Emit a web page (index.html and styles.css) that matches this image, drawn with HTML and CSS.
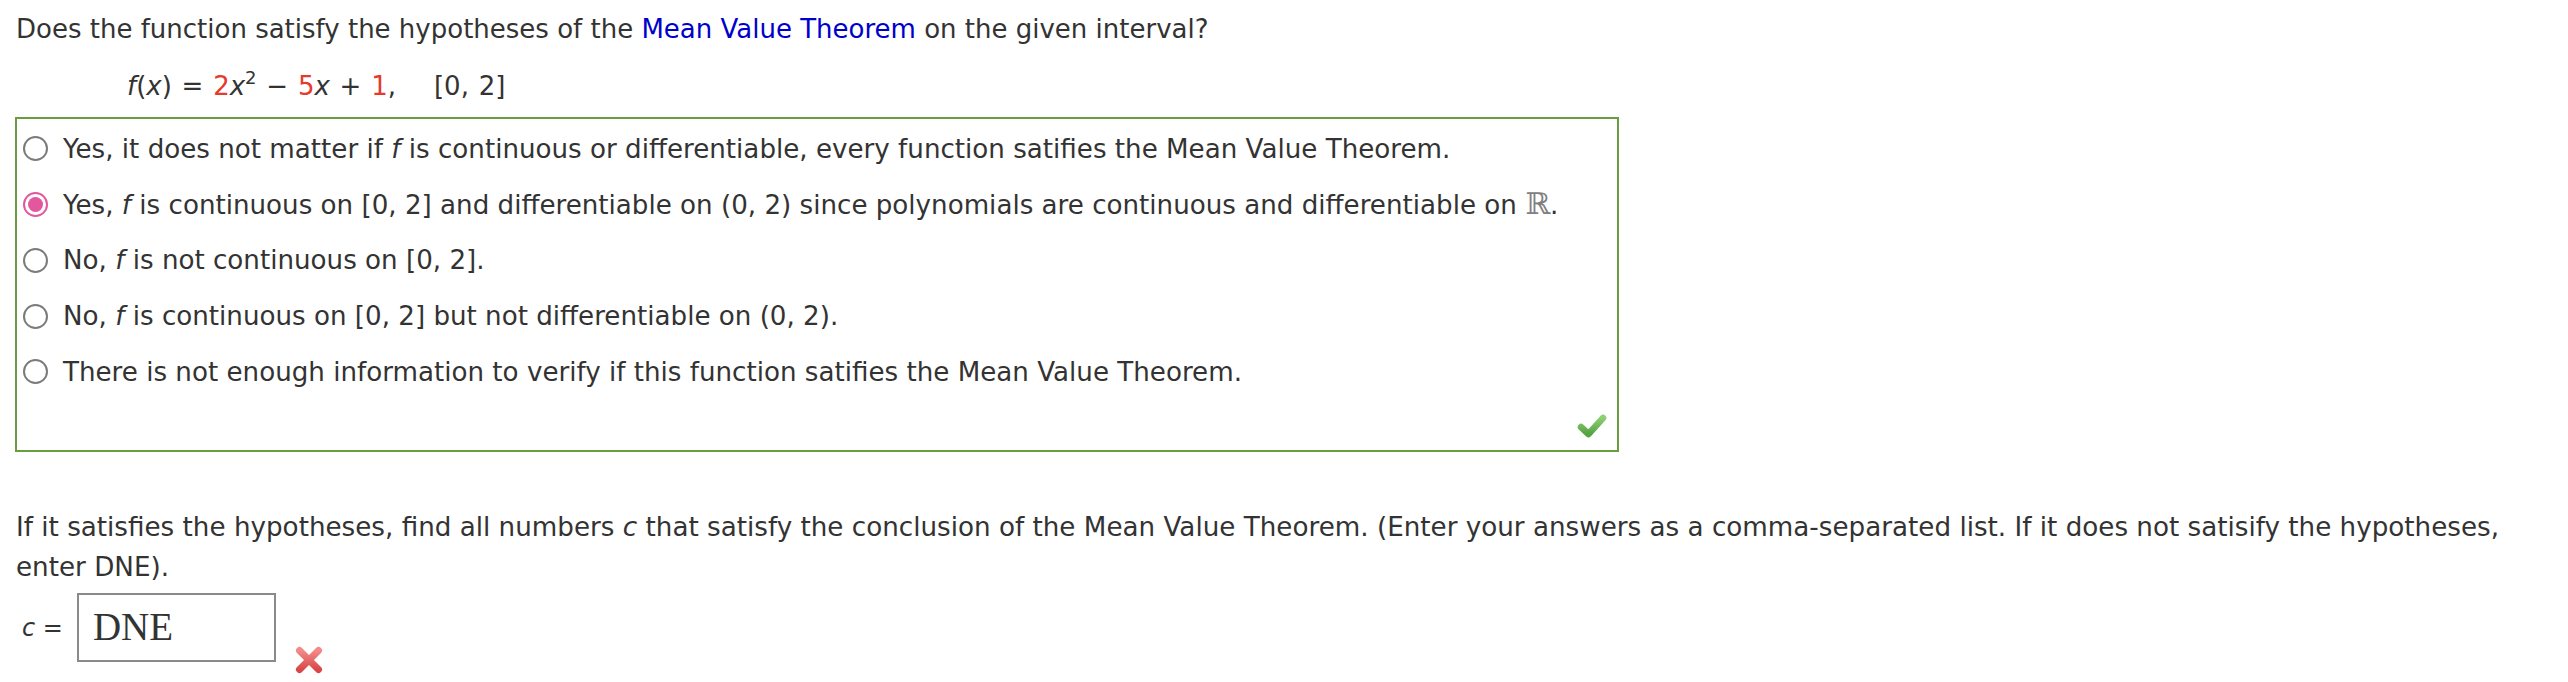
FILE: index.html
```html
<!DOCTYPE html>
<html lang="en">
<head>
<meta charset="utf-8">
<title>Mean Value Theorem</title>
<link rel="stylesheet" href="styles.css">
</head>
<body>
<div class="page">
  <p class="question">Does the function satisfy the hypotheses of the <span class="link">Mean Value Theorem</span> on the given interval?</p>
  <p class="formula"><i>f</i>(<i>x</i>) = <span class="red">2</span><i>x</i><sup>2</sup> &minus; <span class="red">5</span><i>x</i> + <span class="red">1</span>,<span class="interval">[0, 2]</span></p>

  <div class="answer-box">
    <ul class="options">
      <li class="option"><span class="radio"></span><span class="opt-text">Yes, it does not matter if <i>f</i> is continuous or differentiable, every function satifies the Mean Value Theorem.</span></li>
      <li class="option"><span class="radio selected"></span><span class="opt-text">Yes, <i>f</i> is continuous on [0, 2] and differentiable on (0, 2) since polynomials are continuous and differentiable on <span class="reals">&#8477;</span>.</span></li>
      <li class="option"><span class="radio"></span><span class="opt-text">No, <i>f</i> is not continuous on [0, 2].</span></li>
      <li class="option"><span class="radio"></span><span class="opt-text">No, <i>f</i> is continuous on [0, 2] but not differentiable on (0, 2).</span></li>
      <li class="option"><span class="radio"></span><span class="opt-text">There is not enough information to verify if this function satifies the Mean Value Theorem.</span></li>
    </ul>
    <div class="status">
      <svg class="check" width="30" height="26" viewBox="0 0 30 26">
        <defs>
          <linearGradient id="cg" x1="0" y1="0" x2="0" y2="1">
            <stop offset="0" stop-color="#8dcf72"/>
            <stop offset="1" stop-color="#55a343"/>
          </linearGradient>
        </defs>
        <path d="M4 14 L11.5 21 L26 5" fill="none" stroke="url(#cg)" stroke-width="6.5" stroke-linecap="round" stroke-linejoin="round"/>
      </svg>
    </div>
  </div>

  <p class="prompt">If it satisfies the hypotheses, find all numbers <i>c</i> that satisfy the conclusion of the Mean Value Theorem. (Enter your answers as a comma-separated list. If it does not satisify the hypotheses,<br>enter DNE).</p>

  <div class="answer-row">
    <span class="c-label"><i>c</i> =</span>
    <span class="input">DNE</span>
    <svg class="cross" width="30" height="30" viewBox="0 0 30 30">
      <defs>
        <linearGradient id="xg" x1="0" y1="0" x2="0" y2="1">
          <stop offset="0" stop-color="#f28a8a"/>
          <stop offset="1" stop-color="#d94848"/>
        </linearGradient>
      </defs>
      <path d="M5.5 5.5 L24.5 24.5 M24.5 5.5 L5.5 24.5" fill="none" stroke="url(#xg)" stroke-width="7" stroke-linecap="round"/>
    </svg>
  </div>
</div>
</body>
</html>
```

FILE: styles.css
```css
html, body {
  margin: 0;
  padding: 0;
  background: #ffffff;
}

body {
  font-family: "DejaVu Sans", Verdana, sans-serif;
  color: #333333;
  font-size: 26px;
}

.page {
  padding: 14px 16px 0 16px;
}

.question {
  margin: 0;
  line-height: 30px;
}

.link {
  color: #0000cc;
}

.formula {
  margin: 27px 0 0 111px;
  line-height: 30px;
  white-space: nowrap;
  word-spacing: 1.5px;
}

.formula sup {
  font-size: 18px;
  line-height: 0;
  vertical-align: 11px;
}

.red {
  color: #e53a2c;
}

.interval {
  margin-left: 38px;
}

.answer-box {
  box-sizing: border-box;
  margin: 16px 0 0 -1px;
  width: 1604px;
  height: 335px;
  border: 2px solid #6a9d40;
  display: flex;
  flex-direction: column;
}

.options {
  list-style: none;
  margin: 0;
  padding: 2px 0 0 6px;
}

.option {
  display: flex;
  align-items: center;
  height: 55.75px;
  line-height: 30px;
  font-size: 26.15px;
}

.radio {
  box-sizing: border-box;
  flex: none;
  width: 25px;
  height: 25px;
  border: 2px solid #7b7b7b;
  border-radius: 50%;
  margin-right: 15px;
  display: flex;
  align-items: center;
  justify-content: center;
}

.radio.selected {
  border-color: #e2579d;
}

.radio.selected::after {
  content: "";
  width: 15px;
  height: 15px;
  border-radius: 50%;
  background: #e2579d;
}

.opt-text {
  white-space: nowrap;
}

.reals {
  font-family: "DejaVu Serif", serif;
  font-size: 30px;
  line-height: 0;
  color: #808080;
}

.status {
  margin-top: auto;
  display: flex;
  justify-content: flex-end;
  padding: 0 10px 11px 0;
}

.check {
  display: block;
}

.prompt {
  margin: 55px 0 0 0;
  font-size: 26.2px;
  line-height: 40px;
  white-space: nowrap;
}

.answer-row {
  display: flex;
  align-items: flex-start;
  margin-top: 6px;
}

.c-label {
  font-size: 24px;
  margin: 21px 14px 0 6px;
  line-height: 28px;
}

.input {
  box-sizing: border-box;
  width: 199px;
  height: 69px;
  border: 2px solid #8a8a8a;
  padding: 12px 0 0 14px;
  font-family: "Liberation Serif", "Times New Roman", serif;
  font-size: 39px;
  line-height: 40px;
  color: #333333;
}

.cross {
  display: block;
  margin: 52px 0 0 18px;
}
```
